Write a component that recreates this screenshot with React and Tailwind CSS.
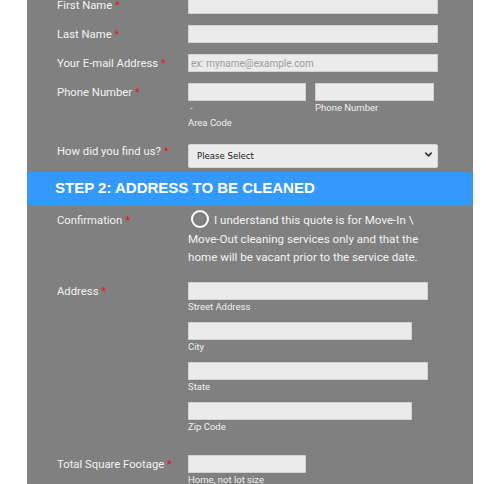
import { ChevronDown } from "lucide-react";

const field =
  "h-[18px] bg-[#ebebeb] border border-[#d2d2d2] outline-none text-[10px] px-[2px] text-[#333] placeholder-[#9c9c9c]";

function Label({ text, className = "" }) {
  return (
    <div className={`w-[131px] shrink-0 text-[11.3px] leading-[16px] pt-[2px] text-[#f3f3f3] ${className}`}>
      {text} <span className="text-[#e3161b]">*</span>
    </div>
  );
}

function Sub({ children }) {
  return <div className="text-[9.5px] leading-[13px] text-[#f0f0f0]">{children}</div>;
}

export default function App() {
  return (
    <div className="min-h-screen bg-white" style={{ fontFamily: "Roboto, 'Noto Sans', sans-serif" }}>
      <div className="mx-auto w-[446px] bg-[#808080] h-[484px] overflow-hidden">
        <div className="px-[30px] flex flex-col -mt-[4px]">
          {/* Step 1 */}
          <div className="flex mb-[11px]">
            <Label text="First Name" />
            <input className={`${field} w-[250px]`} />
          </div>
          <div className="flex mb-[11px]">
            <Label text="Last Name" />
            <input className={`${field} w-[250px]`} />
          </div>
          <div className="flex mb-[11px]">
            <Label text="Your E-mail Address" />
            <input className={`${field} w-[250px]`} placeholder="ex: myname@example.com" />
          </div>
          <div className="flex mb-[13px]">
            <Label text="Phone Number" />
            <div className="flex gap-[9px]">
              <div className="flex flex-col">
                <input className={`${field} w-[118px]`} />
                <div className="text-[9px] leading-[12px] text-[#f0f0f0] pl-[2px] pt-[1px]">-</div>
                <div className="pt-[2px]">
                  <Sub>Area Code</Sub>
                </div>
              </div>
              <div className="flex flex-col">
                <input className={`${field} w-[119px]`} />
                <Sub>Phone Number</Sub>
              </div>
            </div>
          </div>
          <div className="flex">
            <Label text="How did you find us?" />
            <div className="relative w-[250px] h-[24px]">
              <select
                className="appearance-none w-full h-full bg-[#ebebeb] border border-[#d6d6d6] rounded-[2px] text-[9.5px] text-[#222] pl-[8px] outline-none"
                style={{ fontFamily: "'DejaVu Sans Condensed', 'DejaVu Sans', sans-serif" }}
              >
                <option>Please Select</option>
              </select>
              <ChevronDown
                className="absolute right-[4px] top-[7px] w-[11px] h-[11px] text-[#333] pointer-events-none"
                strokeWidth={3.5}
              />
            </div>
          </div>
        </div>

        {/* Step 2 heading */}
        <div className="mt-[6px] h-[33px] bg-[#3399ff] flex items-center pl-[28px]">
          <h2
            className="text-white font-bold text-[15px] uppercase"
            style={{ fontFamily: "'Liberation Sans', Arial, sans-serif" }}
          >
            Step 2: Address to be cleaned
          </h2>
        </div>

        <div className="px-[30px] flex flex-col pt-[6px]">
          <div className="flex mb-[15px]">
            <Label text="Confirmation" />
            <div className="w-[250px] text-[11.6px] leading-[18.5px] text-[#f3f3f3]">
              <span className="inline-block align-middle w-[18px] h-[18px] rounded-full border-2 border-white mr-[5px] ml-[3px] -mt-[3px]" />
              I understand this quote is for Move-In \ Move-Out cleaning services only and that the home will be vacant prior to the service date.
            </div>
          </div>

          <div className="flex">
            <Label text="Address" />
            <div className="flex flex-col">
              <input className={`${field} w-[240px]`} />
              <Sub>Street Address</Sub>
              <input className={`${field} w-[224px] mt-[9px]`} />
              <Sub>City</Sub>
              <input className={`${field} w-[240px] mt-[9px]`} />
              <Sub>State</Sub>
              <input className={`${field} w-[224px] mt-[9px]`} />
              <Sub>Zip Code</Sub>
            </div>
          </div>

          <div className="flex mt-[22px]">
            <Label text="Total Square Footage" />
            <div className="flex flex-col">
              <input className={`${field} w-[118px]`} />
              <Sub>Home, not lot size</Sub>
            </div>
          </div>
        </div>
      </div>
    </div>
  );
}
